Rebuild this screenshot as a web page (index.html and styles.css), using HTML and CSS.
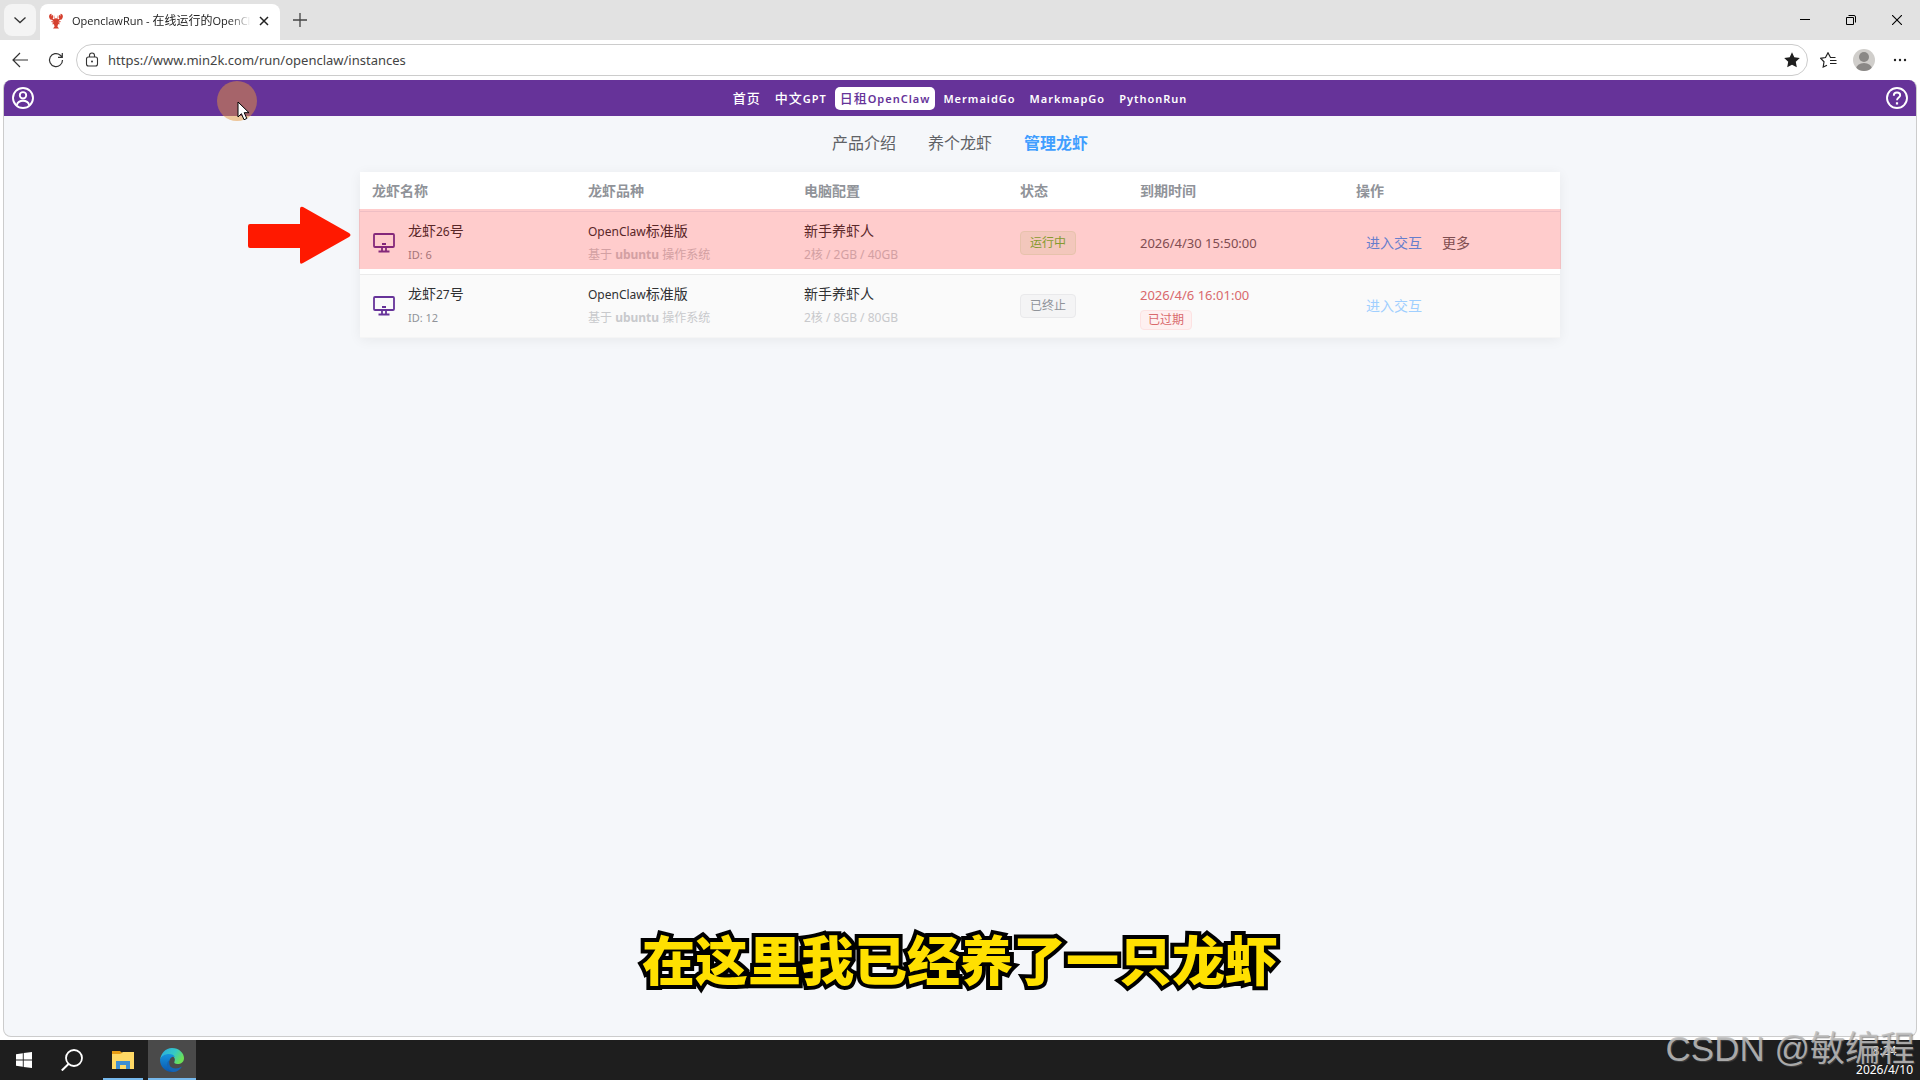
FILE: index.html
```html
<!DOCTYPE html>
<html lang="zh-CN">
<head>
<meta charset="utf-8">
<meta name="viewport" content="width=device-width, initial-scale=1">
<title>OpenclawRun - 在线运行的OpenClaw</title>
<link rel="stylesheet" href="styles.css">
</head>
<body>
<div class="tab-strip">
  <button class="tab-menu" aria-label="标签页操作"><svg width="14" height="14" viewBox="0 0 14 14"><path d="M1.500 4.500l5.500 5 5.500-5" fill="none" stroke="#333" stroke-width="1.300"/></svg></button>
  <div class="browser-tab">
    <svg class="favicon" width="16" height="16" viewBox="0 0 16 16"><g fill="#d5412f"><path d="M5 6.500Q8 4 11 6.500L10 11.500 9.400 13.500 11 15.500H5L6.600 13.500 6 11.500Z"/><path d="M3.500 .8C.5 1 .3 5 2.800 6.800L5 5.600C5.800 3.800 5 2.200 4.200 1.800L3.600 3.500Z"/><path d="M12.500 .8C15.500 1 15.700 5 13.200 6.800L11 5.600C10.200 3.800 11 2.200 11.800 1.800L12.400 3.500Z"/></g><path d="M3 5.500L6.500 8M13 5.500L9.500 8M3.500 8.500l3 1M12.500 8.500l-3 1M4.500 11l2-.7M11.500 11l-2-.7" fill="none" stroke="#d5412f" stroke-width="1.200"/><path d="M6.800 6L6 2.500M9.200 6L10 2.500" fill="none" stroke="#e8887c" stroke-width=".7"/></svg>
    <span class="tab-title">OpenclawRun - <span>在线运行的</span>OpenClaw</span>
    <button class="tab-close" aria-label="关闭标签页"><svg width="10" height="10" viewBox="0 0 10 10"><path d="M1 1l8 8M9 1l-8 8" stroke="#222" stroke-width="1.500"/></svg></button>
  </div>
  <button class="new-tab" aria-label="新建标签页"><svg width="14" height="14" viewBox="0 0 14 14"><path d="M7 0v14M0 7h14" stroke="#444" stroke-width="1.300"/></svg></button>
  <div class="window-controls">
    <button aria-label="最小化"><svg width="10" height="10" viewBox="0 0 10 10"><path d="M0 4.500h10" stroke="#000"/></svg></button>
    <button aria-label="还原"><svg width="10" height="10" viewBox="0 0 10 10"><path d="M.5 2.500h7v7h-7zM2.500.5H8Q9.500.5 9.500 2v5.500" fill="none" stroke="#000"/></svg></button>
    <button aria-label="关闭"><svg width="10" height="10" viewBox="0 0 10 10"><path d="M0 0l10 10M10 0L0 10" stroke="#000" stroke-width="1.100"/></svg></button>
  </div>
</div>
<div class="toolbar">
  <button class="tool" aria-label="后退"><svg width="16" height="16" viewBox="0 0 16 16"><path d="M16 8H1M8 1L1 8l7 7" fill="none" stroke="#333" stroke-width="1.200"/></svg></button>
  <button class="tool" aria-label="刷新"><svg width="16" height="16" viewBox="0 0 16 16"><path d="M14.500 8A6.500 6.500 0 1 1 12.300 3.200L14.200 5M14.300 1v4.300H10" fill="none" stroke="#333" stroke-width="1.200"/></svg></button>
  <div class="address">
    <svg width="14" height="16" viewBox="0 0 14 16"><rect x="1.500" y="5" width="11" height="9" rx="2" fill="none" stroke="#333" stroke-width="1.100"/><path d="M4.500 5V3.500Q4.500 1 7 1t2.500 2.500V5" fill="none" stroke="#333" stroke-width="1.100"/><circle cx="7" cy="9.500" r="1" fill="#333"/></svg>
    <input type="text" aria-label="地址栏" value="https://www.min2k.com/run/openclaw/instances">
    <button class="star" aria-label="收藏此页"><svg width="16" height="16" viewBox="0 0 16 16"><path d="M8 .3l2.300 4.900 5.500.7-4 3.800 1 5.600L8 12.700l-4.800 2.600 1-5.600-4-3.800 5.500-.7z" fill="#1f1f1f"/></svg></button>
  </div>
  <button class="tool favorites" aria-label="收藏夹"><svg width="17" height="16" viewBox="0 0 17 16"><path d="M15.500 5.500h-5L8 .8 5.500 5.500l-4.800.8L4 9.800l-.8 5.200L7 13.200" fill="none" stroke="#222" stroke-width="1.200"/><path d="M10 8.500h6.500M10 11.500h6.500" stroke="#222" stroke-width="1.200"/></svg></button>
  <button class="tool profile" aria-label="个人资料"><svg width="22" height="22" viewBox="0 0 22 22"><defs><clipPath id="avatar"><circle cx="11" cy="11" r="11"/></clipPath></defs><g clip-path="url(#avatar)"><path d="M0 0h22v22H0z" fill="#d0cecb"/><circle cx="11" cy="8" r="5" fill="#8a8886"/><ellipse cx="11" cy="20" rx="8" ry="6" fill="#8a8886"/></g></svg></button>
  <button class="tool more" aria-label="更多选项"><svg width="14" height="4" viewBox="0 0 14 4"><g fill="#222"><circle cx="2" cy="2" r="1.200"/><circle cx="7" cy="2" r="1.200"/><circle cx="12" cy="2" r="1.200"/></g></svg></button>
</div>

<div class="page">
  <header class="site-header">
    <a href="#" class="header-icon" aria-label="账户"><svg width="22" height="22" viewBox="0 0 22 22" fill="none" stroke="#fff" stroke-width="1.900"><circle cx="11" cy="11" r="10"/><circle cx="11" cy="8.300" r="3.200"/><path d="M4.800 18Q6 13.700 11 13.700T17.200 18"/></svg></a>
    <nav class="site-nav">
      <a href="#"><span>首页</span></a><a href="#"><span>中文</span>GPT</a><a href="#" class="current"><span>日租</span>OpenClaw</a><a href="#">MermaidGo</a><a href="#">MarkmapGo</a><a href="#">PythonRun</a>
    </nav>
    <a href="#" class="header-icon" aria-label="帮助"><svg width="22" height="22" viewBox="0 0 22 22" fill="none" stroke="#fff" stroke-width="1.900"><circle cx="11" cy="11" r="10"/><path d="M7.800 8.700Q7.800 5.500 11 5.500t3.200 2.800C14.200 10.500 11 10.700 11 13.300"/><path d="M11 15.200v2.200" stroke-width="2.200"/></svg></a>
  </header>
  <nav class="sub-nav"><a href="#">产品介绍</a><a href="#">养个龙虾</a><a href="#" class="active">管理龙虾</a></nav>
  <main class="instances">
    <table>
      <colgroup><col class="wide"><col class="wide"><col class="wide"><col class="narrow"><col class="wide"><col class="wide"></colgroup>
      <thead><tr><th>龙虾名称</th><th>龙虾品种</th><th>电脑配置</th><th>状态</th><th>到期时间</th><th>操作</th></tr></thead>
      <tbody>
        <tr>
          <td><div class="name"><svg width="22" height="20" viewBox="0 0 22 20" fill="none" stroke="#663399" stroke-width="1.800"><rect x="1" y="1" width="20" height="13" rx="1"/><path d="M9 14v4M13 14v4M5.500 18.500h11M9 11h4"/></svg><div>龙虾<span class="latin">26</span>号<small class="id">ID: 6</small></div></div></td>
          <td><span class="latin">OpenClaw</span>标准版<small>基于 <b>ubuntu</b> 操作系统</small></td>
          <td>新手养虾人<small>2核 / 2GB / 40GB</small></td>
          <td><span class="tag running">运行中</span></td>
          <td class="date">2026/4/30 15:50:00</td>
          <td><div class="actions"><a href="#">进入交互</a><button>更多</button></div></td>
        </tr>
        <tr class="expired">
          <td><div class="name"><svg width="22" height="20" viewBox="0 0 22 20" fill="none" stroke="#663399" stroke-width="1.800"><rect x="1" y="1" width="20" height="13" rx="1"/><path d="M9 14v4M13 14v4M5.500 18.500h11M9 11h4"/></svg><div>龙虾<span class="latin">27</span>号<small class="id">ID: 12</small></div></div></td>
          <td><span class="latin">OpenClaw</span>标准版<small>基于 <b>ubuntu</b> 操作系统</small></td>
          <td>新手养虾人<small>2核 / 8GB / 80GB</small></td>
          <td><span class="tag stopped">已终止</span></td>
          <td class="date">2026/4/6 16:01:00<span class="tag overdue">已过期</span></td>
          <td><div class="actions"><a href="#" class="disabled">进入交互</a></div></td>
        </tr>
      </tbody>
    </table>
    <div class="highlight"></div>
    <svg class="arrow" width="103" height="59" viewBox="0 0 103 59"><path d="M2 18H52V3Q52 0 55 1L101 27Q104 29 101 31L55 57Q52 59 52 56V42H2Q0 42 0 40V20Q0 18 2 18Z" fill="#ff1900"/></svg>
  </main>
</div>

<footer class="taskbar">
  <button aria-label="开始"><svg width="16" height="16" viewBox="0 0 16 16"><path d="M0 2.200L6.800 1.200V7.500H0zM7.700 1.100L16 0v7.500H7.700zM0 8.400h6.800v6.400L0 13.800zM7.700 8.400H16V16l-8.300-1.100z" fill="#fff"/></svg></button>
  <button aria-label="搜索"><svg width="22" height="22" viewBox="0 0 22 22"><circle cx="13" cy="9" r="8" fill="none" stroke="#fff" stroke-width="1.800"/><path d="M7.500 15L.8 21.500" stroke="#fff" stroke-width="2"/></svg></button>
  <button class="open" aria-label="文件资源管理器"><svg width="22" height="18" viewBox="0 0 22 18"><path d="M0 0h8l2 2H0z" fill="#e89d14"/><path d="M0 2h9l2-1h11v17H0z" fill="#ffd965"/><path d="M0 1h8l2 1-2 1H0z" fill="#e89d14"/><path d="M4 18v-8h14v8h-4v-4H8v4z" fill="#3f8fd2"/></svg></button>
  <button class="open focused" aria-label="Microsoft Edge"><svg width="24" height="24" viewBox="0 0 24 24"><defs><linearGradient id="edge-top" x1="0" y1="0" x2="1" y2=".5"><stop offset="0" stop-color="#2aa7e4"/><stop offset=".6" stop-color="#35c9c5"/><stop offset="1" stop-color="#6bdf55"/></linearGradient><linearGradient id="edge-side" x1="0" y1="0" x2="0" y2="1"><stop offset="0" stop-color="#1793dd"/><stop offset="1" stop-color="#0b58ae"/></linearGradient></defs><path d="M0 12C1 5 5.500 0 12 0c7 0 12 5 12 10 0 4-3 6-6.500 6-2.500 0-4-1-3-2.500C16 10 13 7 9 7c-4 0-8 2-9 5z" fill="url(#edge-top)"/><path d="M0 12c1-4 5-6 9-6 3 0 5 1 6 3-6-2-9 9-1 14.800C6 25 0 19 0 12z" fill="url(#edge-side)"/><path d="M9.500 12c-3 7 5 11 12.500 6.500C20 22 17 24 13 24 7 22 5 15 9.500 12z" fill="#1565b5"/></svg></button>
  <time class="clock"><span>8:24</span><span>2026/4/10</span></time>
</footer>

<div class="pointer"><svg width="13" height="20" viewBox="0 0 13 20"><path d="M1 1v15l3.400-3.300L7 18.700l2.800-1.200-2.600-5.800H12z" fill="#fff" stroke="#000"/></svg></div>
<p class="caption">在这里我已经养了一只龙虾</p>
<div class="watermark">CSDN @敏编程</div>
</body>
</html>
```
FILE: styles.css
```css
* { box-sizing: border-box; }
body {
  margin: 0;
  min-height: 100vh;
  display: flex;
  flex-direction: column;
  position: relative;
  overflow: hidden;
  background: #fff;
  font-family: "Noto Sans", "Noto Sans CJK SC", sans-serif;
  font-size: 14px;
  color: #303133;
}
button { border: 0; padding: 0; background: none; font: inherit; color: inherit; }
a { text-decoration: none; color: inherit; }
svg { display: block; flex: none; }

/* browser chrome */
.tab-strip { height: 40px; display: flex; align-items: center; background: #e2e2e2; padding-left: 4px; }
.tab-menu { width: 32px; height: 32px; border-radius: 8px; background: #f4f4f4; display: grid; place-items: center; margin-right: 4px; }
.browser-tab { width: 240px; height: 36px; align-self: flex-end; background: #fff; border-radius: 8px 8px 0 0; display: flex; align-items: center; padding: 0 11px 2px 8px; }
.tab-title {
  flex: 1;
  margin: 0 8px;
  white-space: nowrap;
  overflow: hidden;
  font: 11px/20px "Open Sans", "Noto Sans CJK SC", sans-serif;
  color: #222;
  -webkit-mask-image: linear-gradient(to right, #000 88%, transparent);
  mask-image: linear-gradient(to right, #000 88%, transparent);
}
.tab-title span { font-size: 12px; }
.new-tab { margin-left: 13px; }
.window-controls { margin-left: auto; display: flex; }
.window-controls button { width: 46px; height: 40px; display: grid; place-items: center; }
.toolbar { height: 40px; display: flex; align-items: center; padding-right: 2px; }
.tool { width: 36px; height: 32px; display: grid; place-items: center; }
.toolbar > .tool:first-child { margin-left: 2px; }
.address { flex: 1; height: 32px; border: 1px solid #ccc; border-radius: 16px; display: flex; align-items: center; padding: 0 7px 0 8px; margin: 0 2px; }
.address input { flex: 1; min-width: 0; border: 0; padding: 0 0 0 9px; outline: 0; background: none; color: #444; font: 13px/20px "Noto Sans", sans-serif; }

/* site */
.page { flex: 1; margin: 0 3px 3px; border: 1px solid #ccc; border-top: 0; border-radius: 8px; background: #f5f7fa; overflow: hidden; }
.site-header { height: 36px; background: #663399; display: flex; align-items: center; justify-content: space-between; padding: 0 8px; }
.site-nav { display: flex; align-items: center; padding-top: 1px; color: #fff; font-size: 11px; font-weight: 600; line-height: 23px; letter-spacing: 1px; }
.site-nav a { padding: 0 7px; border-radius: 5px; white-space: nowrap; }
.site-nav span { font-size: 13px; font-weight: 500; }
.site-nav .current { background: #fff; color: #663399; padding: 0 5px; margin: 0 1px; }
.sub-nav { display: flex; justify-content: center; gap: 32px; padding: 15px 0 17px; font-size: 16px; line-height: 24px; color: #606266; }
.sub-nav .active { color: #409eff; font-weight: 700; }
.instances { max-width: 1200px; margin: 0 auto; position: relative; }
table { width: 100%; table-layout: fixed; border-collapse: separate; border-spacing: 0; background: #fff; box-shadow: 0 2px 12px rgba(0, 0, 0, .06); line-height: 24px; }
.wide { width: 18%; }
.narrow { width: 10%; }
th { text-align: left; color: #909399; padding: 7px 12px 8px; border-bottom: 1px solid #ebeef5; }
td { padding: 7px 12px; border-bottom: 1px solid #ebebeb; white-space: nowrap; }
tbody tr:last-child td { border-bottom-color: #f5f5f5; }
.expired { background: #fafafa; }
.name { display: flex; align-items: center; gap: 13px; padding-left: 1px; }
.latin { font-size: 12px; line-height: 16px; }
small { display: block; font-size: 12px; color: #c8c9cc; }
.id { color: #909399; font-size: 11px; }
.date { color: #606266; font-size: 13px; }
.expired .date { color: #d9696c; }
.tag { border: 1px solid; border-radius: 4px; font-size: 12px; line-height: 22px; padding: 0 9px; display: table; }
.running { color: #67c23a; background: #f0f9eb; border-color: #e1f3d8; }
.stopped { color: #909399; background: #f4f4f5; border-color: #e9e9eb; }
.overdue { color: #d9696c; background: #fef0f0; border-color: #fde2e2; padding: 0 7px; line-height: 18px; margin-top: 3px; }
.actions { display: flex; gap: 20px; padding-left: 10px; }
.actions a { color: #409eff; }
.actions .disabled { color: #a0cfff; }
.actions button { color: #606266; }

/* presentation overlays */
.highlight { position: absolute; inset: 37px -1px auto; height: 60px; background: rgba(255, 0, 0, .2); }
.arrow { position: absolute; right: calc(100% + 9px); top: 34px; }
.pointer { position: absolute; left: 217px; top: 81px; width: 40px; height: 40px; border-radius: 50%; background: rgba(230, 150, 60, .5); padding: 20px 0 0 20px; }
.caption {
  position: absolute;
  left: 0;
  right: 0;
  bottom: 82px;
  margin: 0;
  text-align: center;
  font: 900 53px/80px "Noto Sans CJK SC", sans-serif;
  color: #ffe000;
  -webkit-text-stroke: 8px #000;
  paint-order: stroke fill;
  stroke-linejoin: round;
}
.watermark { position: absolute; right: 5px; bottom: 6px; font: 35px/50px "Liberation Sans", "Noto Sans CJK SC", sans-serif; color: rgba(190, 190, 190, .85); text-shadow: 1px 1px 1px rgba(90, 90, 90, .6); }

/* taskbar */
.taskbar { height: 40px; background: #1e1e1e; display: flex; color: #fff; }
.taskbar button { width: 48px; display: grid; place-items: center; }
.taskbar .open { background: linear-gradient(#76b9ed, #76b9ed) bottom / 40px 2px no-repeat; margin-left: 3px; }
.taskbar .focused { background: linear-gradient(#76b9ed, #76b9ed) bottom / 100% 2px no-repeat #4a4a4a; margin-left: 1px; }
.clock { margin-left: auto; padding: 1px 7px 0 0; text-align: center; font: 12px/19px "Noto Sans", sans-serif; display: flex; flex-direction: column; }
```
